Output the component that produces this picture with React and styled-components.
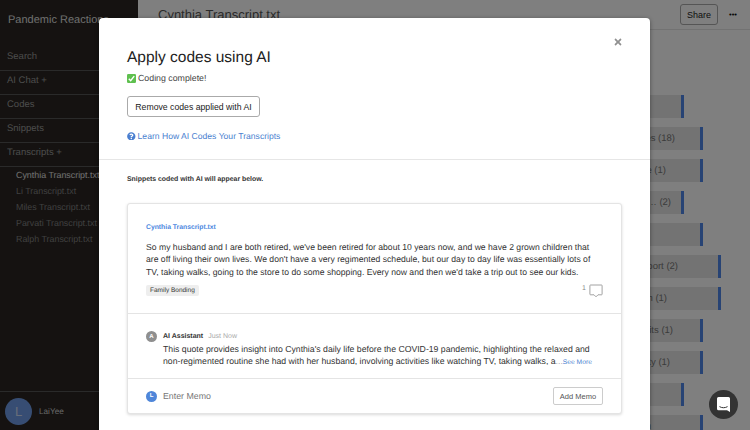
import React from 'react';
import styled, { createGlobalStyle } from 'styled-components';
import { FaQuestionCircle, FaTimes } from 'react-icons/fa';

const navItems = ['Search', 'AI Chat +', 'Codes', 'Snippets', 'Transcripts +'];
const files = ['Cynthia Transcript.txt', 'Li Transcript.txt', 'Miles Transcript.txt', 'Parvati Transcript.txt', 'Ralph Transcript.txt'];
const bars = [
  { width: 546, label: '' },
  { width: 565, label: 'Daily Routines (18)' },
  { width: 565, label: 'Home Life (1)', pad: 34 },
  { width: 546, label: 'Everyday … (2)', pad: 10 },
  { width: 565, label: '' },
  { width: 583, label: 'Family Support (2)', pad: 40 },
  { width: 583, label: 'Relaxation (1)', pad: 51 },
  { width: 565, label: 'Health Benefits (1)', pad: 27 },
  { width: 565, label: 'Routine Stability (1)', pad: 30 },
  { width: 546, label: '' },
  { width: 565, label: 'Reflection', pad: 49 },
];

const App = () => (
  <Page>
    <GlobalStyle />
    <Sidebar>
      <ProjectName>Pandemic Reactions</ProjectName>
      <Nav>
        {navItems.map(item => (
          <NavItem key={item}>{item}</NavItem>
        ))}
      </Nav>
      <FileList>
        {files.map((file, i) => (
          <FileItem key={file} $active={i === 0}>{file}</FileItem>
        ))}
      </FileList>
      <UserRow>
        <UserAvatar>L</UserAvatar>
        <UserName>LaiYee</UserName>
      </UserRow>
    </Sidebar>
    <Main>
      <Header>
        <DocTitle>Cynthia Transcript.txt</DocTitle>
        <ShareButton>Share</ShareButton>
        <MoreDots>•••</MoreDots>
      </Header>
      <BarList>
        {bars.map((bar, i) => (
          <Bar key={i} $pad={bar.pad} style={{ width: bar.width }}>{bar.label}</Bar>
        ))}
      </BarList>
    </Main>
    <Overlay />
    <Modal>
      <ModalHead>
        <CloseButton><FaTimes /></CloseButton>
        <ModalTitle>Apply codes using AI</ModalTitle>
        <Status>
          <svg width="9" height="9" viewBox="0 0 10 10">
            <rect width="10" height="10" rx="1.5" fill="#5fc04f" />
            <path d="M2 5.2l2.1 2.2L8 2.4" fill="none" stroke="#fff" strokeWidth="1.6" />
          </svg>
          Coding complete!
        </Status>
        <RemoveButton>Remove codes applied with AI</RemoveButton>
        <LearnLink><FaQuestionCircle />Learn How AI Codes Your Transcripts</LearnLink>
      </ModalHead>
      <ModalBody>
        <Hint>Snippets coded with AI will appear below.</Hint>
        <Card>
          <SnippetSection>
            <SnippetFile>Cynthia Transcript.txt</SnippetFile>
            <SnippetText>
              So my husband and I are both retired, we've been retired for about 10 years now, and we have 2 grown children that
              are off living their own lives. We don't have a very regimented schedule, but our day to day life was essentially lots of
              TV, taking walks, going to the store to do some shopping. Every now and then we'd take a trip out to see our kids.
            </SnippetText>
            <SnippetFooter>
              <CodeTag>Family Bonding</CodeTag>
              <CommentCount>
                <CountNumber>1</CountNumber>
                <svg width="14" height="14" viewBox="0 0 14 14">
                  <path d="M1.5 1h11a.6.6 0 0 1 .6.6v8.6a.6.6 0 0 1-.6.6H9l-2 2-2-2H1.5a.6.6 0 0 1-.6-.6V1.600a.6.6 0 0 1 .6-.6z" fill="#fff" stroke="#8c8c8c" strokeWidth="0.8" />
                </svg>
              </CommentCount>
            </SnippetFooter>
          </SnippetSection>
          <MemoSection>
            <MemoAvatar $color="#8f8f8f">A</MemoAvatar>
            <MemoContent>
              <MemoMeta><strong>AI Assistant</strong><span>Just Now</span></MemoMeta>
              <MemoText>
                This quote provides insight into Cynthia's daily life before the COVID-19 pandemic, highlighting the relaxed and
                non-regimented routine she had with her husband, involving activities like watching TV, taking walks, a<Faded>...</Faded><SeeMore>See More</SeeMore>
              </MemoText>
            </MemoContent>
          </MemoSection>
          <EnterRow>
            <MemoAvatar $color="#4f86d9">L</MemoAvatar>
            <MemoPlaceholder>Enter Memo</MemoPlaceholder>
            <AddMemoButton>Add Memo</AddMemoButton>
          </EnterRow>
        </Card>
      </ModalBody>
    </Modal>
    <ChatBubble>
      <svg width="13" height="15" viewBox="0 0 13 15">
        <path d="M1.500 0h10A1.500 1.500 0 0 1 13 1.500V15l-3-1.700H1.500A1.500 1.500 0 0 1 0 11.800V1.500A1.500 1.500 0 0 1 1.500 0z" fill="#fff" />
        <path d="M2.800 9.800c2.200 1.300 5.200 1.300 7.400 0" fill="none" stroke="#333" strokeWidth="1" strokeLinecap="round" />
      </svg>
    </ChatBubble>
  </Page>
);

const GlobalStyle = createGlobalStyle`
  html, body {
    margin: 0;
    padding: 0;
    height: 100%;
    overflow: hidden;
  }
  body {
    font-family: "Liberation Sans", Arial, sans-serif;
    text-rendering: geometricPrecision;
  }
`;

const Page = styled.div`
  position: relative;
  display: flex;
  width: 750px;
  height: 430px;
  overflow: hidden;
  background: #fff;
`;

const Sidebar = styled.aside`
  display: flex;
  flex-direction: column;
  flex: 0 0 138px;
  background: #2a2522;
`;

const ProjectName = styled.div`
  height: 47px;
  padding: 14px 0 0 8px;
  box-sizing: border-box;
  font-size: 11px;
  line-height: 13px;
  color: #ddd;
  white-space: nowrap;
`;

const Nav = styled.nav`
  display: flex;
  flex-direction: column;
`;

const NavItem = styled.div`
  height: 24px;
  padding: 3px 0 0 7px;
  box-sizing: border-box;
  font-size: 9.5px;
  line-height: 13px;
  color: #999;
  border-bottom: 1px solid #555;
`;

const FileList = styled.div`
  display: flex;
  flex-direction: column;
  flex: 1;
  padding-left: 16px;
`;

const FileItem = styled.div`
  height: 16px;
  font-size: 8.9px;
  line-height: 16px;
  white-space: nowrap;
  color: ${p => (p.$active ? '#e0e0e0' : '#808080')};
`;

const UserRow = styled.div`
  display: flex;
  align-items: center;
  gap: 7px;
  flex: 0 0 38px;
  padding-left: 5px;
  border-top: 1px solid #555;
`;

const UserAvatar = styled.div`
  display: flex;
  align-items: center;
  justify-content: center;
  width: 27px;
  height: 27px;
  border-radius: 50%;
  background: #6f9be6;
  color: #cfdcf2;
  font-size: 13px;
`;

const UserName = styled.span`
  font-size: 8.2px;
  color: #ccc;
`;

const Main = styled.main`
  flex: 1;
  display: flex;
  flex-direction: column;
  min-width: 0;
`;

const Header = styled.header`
  display: flex;
  flex: 0 0 29px;
  align-items: center;
  padding: 0 13px 0 20px;
  border-bottom: 1px solid #e4e4e4;
  box-sizing: content-box;
`;

const DocTitle = styled.div`
  flex: 1;
  font-size: 13px;
  color: #555;
`;

const ShareButton = styled.button`
  width: 38px;
  height: 21px;
  padding: 0;
  background: #fff;
  border: 1px solid #aaa;
  border-radius: 3px;
  font-family: inherit;
  font-size: 9px;
  color: #222;
`;

const MoreDots = styled.span`
  margin-left: 11px;
  width: 8px;
  font-size: 7.5px;
  color: #111;
  white-space: nowrap;
`;

const BarList = styled.div`
  display: flex;
  flex-direction: column;
  gap: 9px;
  padding-top: 65px;
`;

const Bar = styled.div`
  flex: 0 0 23px;
  box-sizing: border-box;
  padding-right: ${p => p.$pad ?? 25}px;
  border-right: 3px solid #4f86e8;
  background: #e6e6e6;
  text-align: right;
  font-size: 9.5px;
  line-height: 23px;
  color: #777;
  white-space: nowrap;
`;

const Overlay = styled.div`
  position: absolute;
  inset: 0;
  background: rgba(0, 0, 0, 0.5);
`;

const Modal = styled.div`
  position: absolute;
  top: 18px;
  left: 99px;
  width: 551px;
  height: 430px;
  background: #fff;
  border-radius: 4px;
  box-shadow: 0 1px 4px rgba(0, 0, 0, 0.4);
`;

const ModalHead = styled.div`
  position: relative;
  display: flex;
  flex-direction: column;
  align-items: flex-start;
  height: 142px;
  padding: 30px 28px 0;
  box-sizing: border-box;
  border-bottom: 1px solid #e6e6e6;
`;

const CloseButton = styled.span`
  position: absolute;
  top: 19px;
  right: 27px;
  display: flex;
  font-size: 10px;
  color: #909090;
`;

const ModalTitle = styled.h2`
  margin: 0;
  font-size: 15.5px;
  font-weight: 400;
  line-height: 19px;
  color: #222;
`;

const Status = styled.div`
  display: flex;
  align-items: center;
  gap: 2px;
  margin-top: 5px;
  font-size: 8.8px;
  line-height: 12px;
  color: #444;
`;

const RemoveButton = styled.button`
  width: 133px;
  height: 21px;
  margin-top: 12px;
  padding: 0;
  background: #fff;
  border: 1px solid #aaa;
  border-radius: 3px;
  font-family: inherit;
  font-size: 8.7px;
  color: #222;
`;

const LearnLink = styled.a`
  display: flex;
  align-items: center;
  gap: 2px;
  margin-top: 13px;
  font-size: 8.6px;
  line-height: 12px;
  color: #4a7fd0;
`;

const ModalBody = styled.div`
  padding: 15px 28px 0;
`;

const Hint = styled.div`
  font-size: 6.9px;
  font-weight: 700;
  line-height: 10px;
  color: #333;
`;

const Card = styled.div`
  width: 495px;
  margin-top: 18px;
  background: #fff;
  border: 1px solid #e4e4e4;
  border-radius: 3px;
  box-shadow: 0 1px 3px rgba(0, 0, 0, 0.15);
  box-sizing: border-box;
`;

const SnippetSection = styled.section`
  height: 110px;
  padding: 19px 18px 0;
  box-sizing: border-box;
  border-bottom: 1px solid #e4e4e4;
`;

const SnippetFile = styled.div`
  font-size: 6.8px;
  font-weight: 700;
  line-height: 10px;
  color: #4a86e0;
`;

const SnippetText = styled.p`
  margin: 8px 0 0;
  width: 452px;
  font-size: 8.65px;
  line-height: 12.3px;
  color: #333;
`;

const SnippetFooter = styled.div`
  display: flex;
  align-items: center;
  justify-content: space-between;
  margin-top: 6px;
`;

const CodeTag = styled.span`
  padding: 1px 4px;
  background: #eee;
  border-radius: 2px;
  font-size: 6.5px;
  line-height: 9px;
  color: #333;
`;

const CommentCount = styled.span`
  display: flex;
  align-items: flex-start;
  gap: 3px;
`;

const CountNumber = styled.span`
  font-size: 7px;
  line-height: 9px;
  color: #888;
`;

const MemoSection = styled.section`
  display: flex;
  gap: 6px;
  height: 65px;
  padding: 17px 18px 0;
  box-sizing: border-box;
  border-bottom: 1px solid #e4e4e4;
`;

const MemoAvatar = styled.div`
  display: flex;
  align-items: center;
  justify-content: center;
  flex: 0 0 11px;
  width: 11px;
  height: 11px;
  border-radius: 50%;
  background: ${p => p.$color};
  color: #fff;
  font-size: 6px;
  font-weight: 700;
`;

const MemoContent = styled.div`
  flex: 1;
`;

const MemoMeta = styled.div`
  display: flex;
  gap: 5px;
  font-size: 7px;
  line-height: 11px;
  color: #aaa;
  & strong {
    color: #333;
  }
`;

const MemoText = styled.p`
  margin: 1px 0 0;
  width: 434px;
  font-size: 8.7px;
  line-height: 12.3px;
  color: #333;
`;

const Faded = styled.span`
  color: #aaa;
`;

const SeeMore = styled.a`
  font-size: 6.7px;
  color: #4a7fd0;
`;

const EnterRow = styled.div`
  display: flex;
  align-items: center;
  gap: 6px;
  height: 34px;
  padding: 0 18px;
`;

const MemoPlaceholder = styled.span`
  flex: 1;
  font-size: 8.8px;
  color: #777;
`;

const AddMemoButton = styled.button`
  width: 50px;
  height: 18px;
  padding: 0;
  background: #fff;
  border: 1px solid #ccc;
  border-radius: 2px;
  font-family: inherit;
  font-size: 7.5px;
  color: #555;
`;

const ChatBubble = styled.div`
  position: absolute;
  left: 709px;
  top: 390px;
  display: flex;
  align-items: center;
  justify-content: center;
  width: 29px;
  height: 29px;
  border-radius: 50%;
  background: #333;
`;

export default App;
